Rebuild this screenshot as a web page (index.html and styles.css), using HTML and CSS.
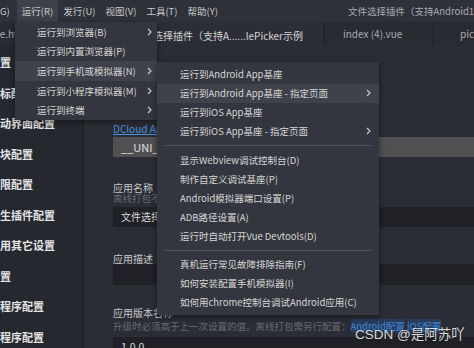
FILE: index.html
```html
<!DOCTYPE html>
<html lang="zh-CN">
<head>
    <meta charset="UTF-8">
    <meta name="viewport" content="width=device-width, initial-scale=1.0">
    <title>HBuilder X - 运行菜单</title>
    <link rel="stylesheet" href="styles.css">
</head>
<body>
    <div class="window">
        <div class="menubar">
            <span class="menu-title first">G)</span>
            <span class="menu-title active">运行(R)</span>
            <span class="menu-title">发行(U)</span>
            <span class="menu-title">视图(V)</span>
            <span class="menu-title">工具(T)</span>
            <span class="menu-title">帮助(Y)</span>
            <span class="window-title">文件选择插件（支持Android11）- HBuilder X</span>
        </div>

        <div class="tabbar">
            <div class="tab tab-first">e.html</div>
            <div class="tab tab-active">文件选择插件（支持A......lePicker示例</div>
            <div class="tab tab-index">index (4).vue</div>
            <div class="tab tab-last">pic</div>
        </div>

        <div class="main">
            <div class="sidebar">
                <div class="side-item">置</div>
                <div class="side-item">标配</div>
                <div class="side-item">动界面配置</div>
                <div class="side-item">块配置</div>
                <div class="side-item">限配置</div>
                <div class="side-item">生插件配置</div>
                <div class="side-item">用其它设置</div>
                <div class="side-item">置</div>
                <div class="side-item">程序配置</div>
                <div class="side-item">程序配置</div>
            </div>

            <div class="content">
                <a class="doc-link">DCloud AppID</a>
                <div class="box box-gray">__UNI__8A5B1C0</div>

                <div class="label label-name">应用名称</div>
                <div class="hint">离线打包不生效</div>
                <div class="box box-dark box-name">文件选择插件（支持Android11）</div>

                <div class="label label-desc">应用描述</div>
                <div class="box box-dark box-desc"></div>

                <div class="label label-version">应用版本名称</div>
                <div class="hint hint-version">升级时必须高于上一次设置的值。离线打包需另行配置：<span class="hint-link">Android配置</span> <span class="hint-link">iOS配置</span></div>
                <div class="box box-dark box-version">1.0.0</div>
            </div>
        </div>

        <!-- 运行 dropdown -->
        <div class="menu menu-run">
            <div class="menu-item">运行到浏览器(B)<svg class="arrow" width="5" height="8" viewBox="0 0 5 8"><path d="M1 1 L4 4 L1 7" /></svg></div>
            <div class="menu-item">运行到内置浏览器(P)</div>
            <div class="menu-item hover">运行到手机或模拟器(N)<svg class="arrow" width="5" height="8" viewBox="0 0 5 8"><path d="M1 1 L4 4 L1 7" /></svg></div>
            <div class="menu-item">运行到小程序模拟器(M)<svg class="arrow" width="5" height="8" viewBox="0 0 5 8"><path d="M1 1 L4 4 L1 7" /></svg></div>
            <div class="menu-item">运行到终端<svg class="arrow" width="5" height="8" viewBox="0 0 5 8"><path d="M1 1 L4 4 L1 7" /></svg></div>
        </div>

        <!-- 运行到手机或模拟器 submenu -->
        <div class="menu menu-phone">
            <div class="menu-item">运行到Android App基座</div>
            <div class="menu-item hover">运行到Android App基座 - 指定页面<svg class="arrow" width="5" height="8" viewBox="0 0 5 8"><path d="M1 1 L4 4 L1 7" /></svg></div>
            <div class="menu-item">运行到iOS App基座</div>
            <div class="menu-item">运行到iOS App基座 - 指定页面<svg class="arrow" width="5" height="8" viewBox="0 0 5 8"><path d="M1 1 L4 4 L1 7" /></svg></div>
            <div class="menu-sep"></div>
            <div class="menu-item">显示Webview调试控制台(D)</div>
            <div class="menu-item">制作自定义调试基座(P)</div>
            <div class="menu-item">Android模拟器端口设置(P)</div>
            <div class="menu-item">ADB路径设置(A)</div>
            <div class="menu-item">运行时自动打开Vue Devtools(D)</div>
            <div class="menu-sep"></div>
            <div class="menu-item">真机运行常见故障排除指南(F)</div>
            <div class="menu-item">如何安装配置手机模拟器(I)</div>
            <div class="menu-item">如何用chrome控制台调试Android应用(C)</div>
        </div>

        <div class="watermark">CSDN @是阿苏吖</div>
    </div>
</body>
</html>
```

FILE: styles.css
```css
* {
    box-sizing: border-box;
}
body {
    margin: 0;
    background: #282b33;
    font-family: 'Noto Sans CJK SC', 'Noto Sans', sans-serif;
    color: #d4d4d4;
    overflow: hidden;
}
.window {
    position: relative;
    width: 474px;
    height: 348px;
    overflow: hidden;
    display: flex;
    flex-direction: column;
}

/* menubar */
.menubar {
    height: 22px;
    flex-shrink: 0;
    display: flex;
    align-items: stretch;
    background: #2e3139;
    font-size: 9.5px;
    color: #c9c9c9;
    white-space: nowrap;
    overflow: hidden;
}
.menu-title {
    display: flex;
    align-items: center;
    padding: 0 5px;
}
.menu-title.first {
    padding: 0 7px 0 0;
}
.menu-title.active {
    background: #3e414a;
}
.window-title {
    display: flex;
    align-items: center;
    margin-left: 125px;
    color: #a9abb0;
    flex-shrink: 0;
}

/* tabs */
.tabbar {
    height: 23px;
    flex-shrink: 0;
    display: flex;
    gap: 2px;
    background: #22252b;
    font-size: 10px;
    white-space: nowrap;
    overflow: hidden;
}
.tab {
    display: flex;
    align-items: center;
    background: #282b32;
    color: #a8aaaf;
    flex-shrink: 0;
    overflow: hidden;
}
.tab-first {
    width: 30px;
    justify-content: flex-end;
}
.tab-active {
    width: 291px;
    justify-content: flex-end;
    padding-right: 20px;
    background: #2b2e36;
    color: #d6d6d6;
    padding-top: 3px;
}
.tab-index {
    width: 107px;
    padding-left: 18px;
}
.tab-last {
    width: 60px;
    padding-left: 26px;
}

/* main area */
.main {
    flex: 1;
    display: flex;
    min-height: 0;
}
.sidebar {
    width: 84px;
    flex-shrink: 0;
    background: #25282f;
    border-right: 1px solid #1c1e23;
    padding-top: 2px;
}
.side-item {
    height: 30.5px;
    line-height: 30.5px;
    font-size: 11px;
    font-weight: bold;
    color: #e4e4e4;
    white-space: nowrap;
}
.content {
    flex: 1;
    padding: 78px 0 0 29px;
    background: #2a2d35;
    min-width: 0;
}
.doc-link {
    display: block;
    height: 12px;
    line-height: 12px;
    font-size: 10px;
    color: #4b8fdc;
    text-decoration: underline;
}
.box {
    height: 20px;
    line-height: 20px;
    padding-left: 8px;
    font-size: 10px;
    white-space: nowrap;
}
.box-gray {
    margin-top: 2px;
    background: #505053;
    color: #e2e2e2;
    font-size: 11px;
}
.box-dark {
    background: #1f2126;
    color: #dadada;
}
.label {
    height: 11px;
    line-height: 11px;
    font-size: 10px;
    color: #c4c6ca;
    white-space: nowrap;
}
.hint {
    height: 11px;
    line-height: 11px;
    font-size: 9.5px;
    color: #676a70;
    white-space: nowrap;
}
.hint-link {
    color: #3f86d6;
    background: rgba(40, 90, 160, 0.35);
}
.label-name {
    margin-top: 25px;
}
.box-name {
    margin-top: 3px;
}
.label-desc {
    margin-top: 26px;
}
.box-desc {
    height: 21px;
}
.label-version {
    margin-top: 22px;
}
.hint-version {
    margin-top: 3px;
}
.box-version {
    margin-top: 5px;
    font-size: 10.5px;
}

/* dropdown menus */
.menu {
    position: absolute;
    background: #33363e;
    box-shadow: 0 2px 6px rgba(0, 0, 0, 0.45);
    font-size: 9.5px;
    color: #d6d6d6;
    white-space: nowrap;
}
.menu-run {
    left: 15px;
    top: 22px;
    width: 142px;
}
.menu-run .menu-item {
    height: 19.6px;
    padding: 0 5px 0 22px;
}
.menu-phone {
    left: 157px;
    top: 62px;
    width: 222px;
    padding: 2.5px 0 3.5px;
}
.menu-phone .menu-item {
    height: 19px;
    padding: 0 8px 0 23px;
}
.menu-item {
    display: flex;
    align-items: center;
    justify-content: space-between;
}
.menu-item.hover {
    background: #3f424a;
}
.arrow path {
    fill: none;
    stroke: #c8c8c8;
    stroke-width: 1.2;
}
.menu-sep {
    height: 1px;
    margin: 4.5px 8px 4px;
    background: #50535b;
}

.watermark {
    position: absolute;
    left: 355px;
    top: 323px;
    font-family: 'Liberation Sans', 'Noto Sans CJK SC', sans-serif;
    font-size: 13.5px;
    color: rgba(255, 255, 255, 0.85);
    text-shadow: 0 0 2px rgba(0, 0, 0, 0.5);
    white-space: nowrap;
}
```
